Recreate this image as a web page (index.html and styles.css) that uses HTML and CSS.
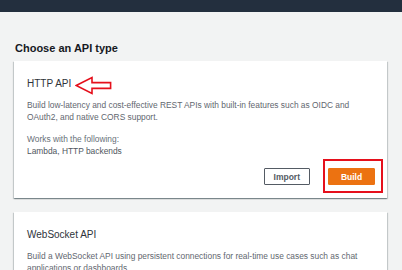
FILE: index.html
```html
<!DOCTYPE html>
<html lang="en">
<head>
    <meta charset="UTF-8">
    <meta name="viewport" content="width=device-width, initial-scale=1.0">
    <title>Choose an API type</title>
    <link rel="stylesheet" href="styles.css">
</head>
<body>
    <div class="topbar"></div>

    <main class="main">
        <h1>Choose an API type</h1>

        <div class="card">
            <h2 class="card-title">HTTP API
                <svg class="arrow" width="37" height="19" viewBox="0 0 37 19">
                    <polygon points="1.2,9.5 17,1.5 17,6.6 35.6,6.6 35.6,12.4 17,12.4 17,17.5" />
                </svg>
            </h2>
            <p class="desc">Build low-latency and cost-effective REST APIs with built-in features such as OIDC and OAuth2, and native CORS support.</p>
            <p class="works">Works with the following:<br><span class="backends">Lambda, HTTP backends</span></p>
            <div class="actions">
                <button class="btn">Import</button>
                <span class="highlight"><button class="btn primary">Build</button></span>
            </div>
        </div>

        <div class="card">
            <h2 class="card-title">WebSocket API</h2>
            <p class="desc">Build a WebSocket API using persistent connections for real-time use cases such as chat applications or dashboards.</p>
        </div>
    </main>
</body>
</html>
```

FILE: styles.css
```css
body {
    margin: 0;
    background: #f2f3f3;
    font-family: "Liberation Sans", Arial, sans-serif;
    color: #16191f;
}
.topbar {
    height: 12px;
    background: #232f3e;
}
.main {
    padding: 29px 15px 0 14px;
}
h1 {
    margin: 0 0 6px 1px;
    font-size: 11px;
    line-height: 14px;
    font-weight: bold;
    color: #16191f;
}
.card {
    background: white;
    box-shadow: 0 1px 1px rgba(0, 28, 36, 0.3), 1px 1px 1px rgba(0, 28, 36, 0.15), -1px 1px 1px rgba(0, 28, 36, 0.15);
    padding: 12px 12px 13px 13px;
    margin-bottom: 14px;
}
.card-title {
    position: relative;
    display: inline-block;
    margin: 0 0 9px 0;
    font-size: 10px;
    line-height: 14px;
    font-weight: normal;
    color: #2e343b;
}
.arrow {
    position: absolute;
    left: 48px;
    top: -1px;
}
.arrow polygon {
    fill: none;
    stroke: #e5101c;
    stroke-width: 1.6;
    stroke-linejoin: miter;
}
.desc {
    margin: 0;
    font-size: 8.4px;
    line-height: 11.5px;
    color: #5f676f;
}
.works {
    margin: 11px 0 0 0;
    font-size: 8.4px;
    line-height: 11.5px;
    color: #687078;
}
.backends {
    color: #4f565e;
}
.actions {
    display: flex;
    justify-content: flex-end;
    align-items: center;
    gap: 18px;
    margin-top: 11px;
}
.btn {
    font-family: "Liberation Sans", Arial, sans-serif;
    font-size: 8.5px;
    font-weight: bold;
    height: 17px;
    padding: 0 9px;
    border: 1px solid #545b64;
    background: white;
    color: #545b64;
    border-radius: 1px;
}
.btn.primary {
    width: 47px;
    background: #ec7211;
    border-color: #ec7211;
    color: white;
}
.highlight {
    position: relative;
    display: flex;
}
.highlight::after {
    content: "";
    position: absolute;
    top: -9px;
    bottom: -8px;
    left: -5px;
    right: -8px;
    border: 2px solid #e5101c;
}
```
